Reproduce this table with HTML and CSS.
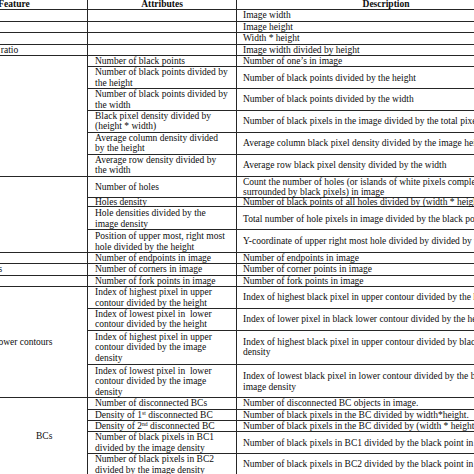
FILE: index.html
```html
<!DOCTYPE html>
<html lang="en">
<head>
<meta charset="utf-8">
<title>Feature table</title>
<link rel="stylesheet" href="styles.css">
</head>
<body>
<table class="features">
  <colgroup>
    <col class="col-feat">
    <col class="col-attr">
    <col class="col-desc">
  </colgroup>
  <thead>
    <tr><th>Feature</th><th>Attributes</th><th>Description</th></tr>
  </thead>
  <tbody>
    <tr><td class="feat">Width</td><td class="attr"></td><td class="desc">Image width</td></tr>
    <tr><td class="feat">Height</td><td class="attr"></td><td class="desc">Image height</td></tr>
    <tr><td class="feat">Area</td><td class="attr"></td><td class="desc">Width * height</td></tr>
    <tr><td class="feat">Aspect ratio</td><td class="attr"></td><td class="desc">Image width divided by height</td></tr>

    <tr><td class="feat" rowspan="6">Pixels</td><td class="attr">Number of black points</td><td class="desc">Number of one’s in image</td></tr>
    <tr><td class="attr">Number of black points divided by the height</td><td class="desc">Number of black points divided by the height</td></tr>
    <tr><td class="attr">Number of black points divided by the width</td><td class="desc">Number of black points divided by the width</td></tr>
    <tr><td class="attr">Black pixel density divided by (height * width)</td><td class="desc">Number of black pixels in the image divided by the total pixels</td></tr>
    <tr><td class="attr">Average column density divided by the height</td><td class="desc">Average column black pixel density divided by the image height</td></tr>
    <tr><td class="attr">Average row density divided by the width</td><td class="desc">Average row black pixel density divided by the width</td></tr>

    <tr><td class="feat" rowspan="4">Holes</td><td class="attr">Number of holes</td><td class="desc">Count the number of holes (or islands of white pixels completely surrounded by black pixels) in image</td></tr>
    <tr class="tight"><td class="attr">Holes density</td><td class="desc">Number of black points of all holes divided by (width * height)</td></tr>
    <tr class="roomy"><td class="attr">Hole densities divided by the image density</td><td class="desc">Total number of hole pixels in image divided by the black points</td></tr>
    <tr class="roomy"><td class="attr">Position of upper most, right most hole divided by the height</td><td class="desc">Y-coordinate of upper right most hole divided by divided by the height</td></tr>

    <tr><td class="feat">Ends</td><td class="attr">Number of endpoints in image</td><td class="desc">Number of endpoints in image</td></tr>
    <tr><td class="feat">Corners</td><td class="attr">Number of corners in image</td><td class="desc">Number of corner points in image</td></tr>
    <tr><td class="feat">Forks</td><td class="attr">Number of fork points in image</td><td class="desc">Number of fork points in image</td></tr>

    <tr><td class="feat" rowspan="4">Up &amp; lower contours</td><td class="attr">Index of highest pixel in upper contour divided by the height</td><td class="desc">Index of highest black pixel in upper contour divided by the height</td></tr>
    <tr><td class="attr">Index of lowest pixel in&nbsp; lower contour divided by the height</td><td class="desc">Index of lower pixel in black lower contour divided by the height</td></tr>
    <tr class="roomier"><td class="attr">Index of highest pixel in upper contour divided by the image density</td><td class="desc">Index of highest black pixel in upper contour divided by black pixel image density</td></tr>
    <tr class="roomy"><td class="attr">Index of lowest pixel in&nbsp; lower contour divided by the image density</td><td class="desc">Index of lowest black pixel in lower contour divided by the black pixel image density</td></tr>

    <tr><td class="feat feat-bcs" rowspan="5">BCs</td><td class="attr">Number of disconnected BCs</td><td class="desc">Number of disconnected BC objects in image.</td></tr>
    <tr><td class="attr">Density of 1<sup>st</sup> disconnected BC</td><td class="desc">Number of black pixels in the BC divided by width*height.</td></tr>
    <tr><td class="attr">Density of 2<sup>nd</sup> disconnected BC</td><td class="desc">Number of black pixels in the BC divided by (width * height).</td></tr>
    <tr><td class="attr">Number of black pixels in BC1 divided by the image density</td><td class="desc">Number of black pixels in BC1 divided by the black point in image</td></tr>
    <tr><td class="attr">Number of black pixels in BC2 divided by the image density</td><td class="desc">Number of black pixels in BC2 divided by the black point in image</td></tr>
  </tbody>
</table>
</body>
</html>
```

FILE: styles.css
```css
html, body {
  margin: 0;
  padding: 0;
  background: #ffffff;
  overflow: hidden;
}

body {
  width: 474px;
  height: 474px;
}

.features {
  border-collapse: collapse;
  table-layout: fixed;
  width: 595px;
  margin: -2px 0 0 -60px;
  font-family: "Liberation Serif", "Times New Roman", serif;
  font-size: 9.5px;
  line-height: 10.4px;
  color: #0d0d0d;
}

.col-feat { width: 147px; }
.col-attr { width: 149px; }
.col-desc { width: 299px; }

.features th,
.features td {
  border: 1px solid #262626;
  padding: 0;
  vertical-align: middle;
  text-align: left;
}

.features th {
  font-weight: bold;
  text-align: center;
  padding: 0 6px;
}

.features td.feat {
  padding-left: 31px;
  padding-right: 4px;
}

.features td.feat-bcs {
  padding-left: 95px;
}

.features td.attr {
  padding: 0 7px;
}

.features td.desc {
  padding: 0 6px;
}

.features tr.tight td {
  line-height: 8px;
}

.features tr.roomy td {
  padding-top: 1px;
}

.features tr.roomier td {
  padding-top: 1px;
  padding-bottom: 1px;
}

.features sup {
  font-size: 0.6em;
  line-height: 0;
  vertical-align: 0.45em;
}
```
